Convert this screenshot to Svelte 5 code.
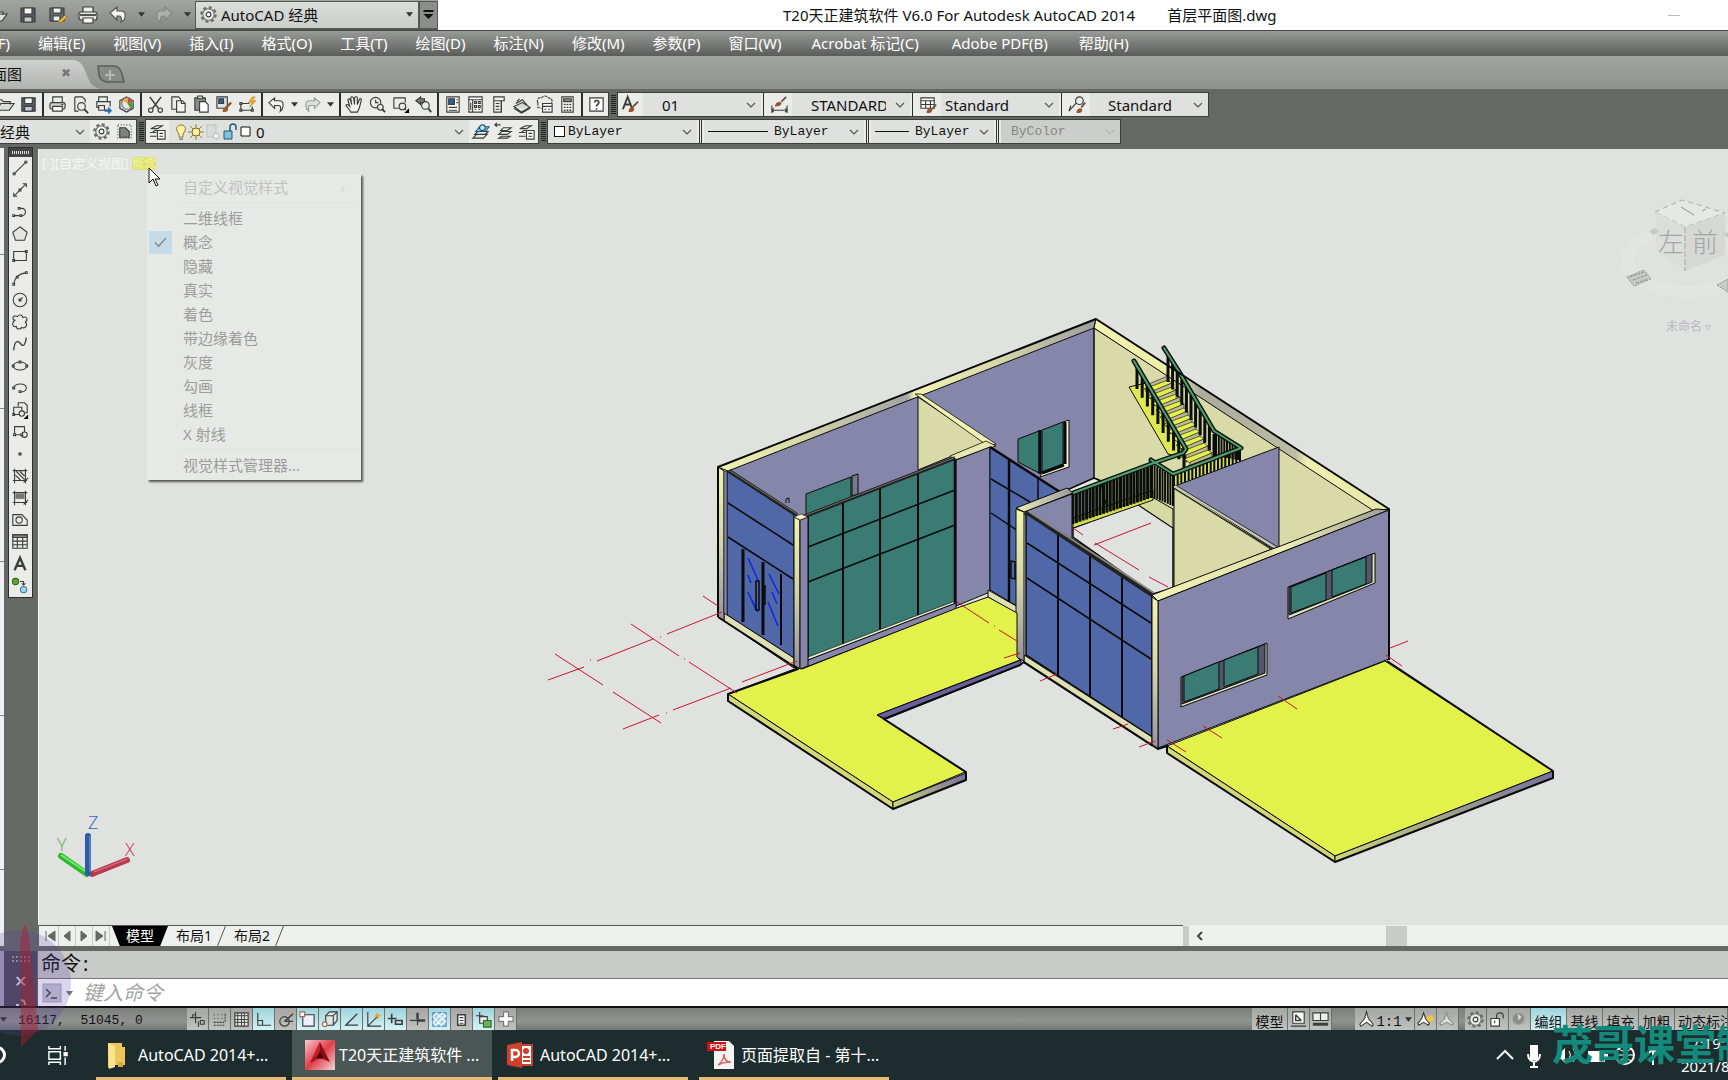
<script>
  const ic = {
    open: '<path d="M1 16V5h5l2 2h7v3M1 16l4-7h14l-5 7z" fill="#dcdedb"/>',
    save: '<path d="M3 3h14v14H3z" fill="#555a66"/><path d="M6 3h8v6H6z" fill="#f4f5f3"/><path d="M6 12h8v5H6z" fill="#c9ccd0"/>',
    saveas: '<path d="M2 3h14v13H2z" fill="#666b72"/><path d="M5 3h8v5H5zM5 11h7v5H5z" fill="#eef0ee"/><path d="M10 17l7-7 2 2-6 6z" fill="#e9b63b" stroke="#8b6a24" stroke-width=".7"/>',
    print: '<path d="M5 8V2h10v6"/><rect x="2" y="8" width="16" height="7" rx="2" fill="#cfd1cf"/><path d="M5 12h10v5H5z" fill="#fff"/><path d="M14 10h2"/>',
    printd: '<path d="M5 8V2h10v6" fill="#eee"/><rect x="1" y="7" width="18" height="8" rx="2" fill="#e4e6e3"/><path d="M2 9h16v2H2z" fill="#555" stroke="none"/><path d="M5 13h10v5H5z" fill="#fff"/>',
    preview: '<path d="M4 2h8l3 3v3M4 2v15h4"/><circle cx="11" cy="12" r="4"/><path d="M14 15l4 4" stroke-width="2"/>',
    publish: '<path d="M5 7V2h9v5M5 13H3V7h14v5M5 11h6v5H5z"/><path d="M11 15h4v-3l4 4.500-4 4v-3h-4z" fill="#2a6dae" stroke="none"/>',
    dwf: '<path d="M3 6l7-4 7 4v8l-7 4-7-4z" fill="#d8dbd8"/><circle cx="11" cy="9" r="6" fill="#e5e7e3" stroke="#777"/><path d="M11 9V3a6 6 0 0 1 5 4z" fill="#d24a3a" stroke="none"/><path d="M11 9l5-2a6 6 0 0 1-2 7z" fill="#4c9a4c" stroke="none"/><path d="M11 9l-5-3a6 6 0 0 1 5-3z" fill="#e3b53c" stroke="none"/>',
    cut: '<path d="M4 2l9 12M16 2L7 14" stroke-width="1.600"/><circle cx="5" cy="16" r="2.300"/><circle cx="15" cy="16" r="2.300"/>',
    copy: '<path d="M3 2h7l2 2v11H3z"/><path d="M8 6h6l3 3v9H8z" fill="#f3f4f2"/><path d="M13 6v3h4"/>',
    paste: '<path d="M3 3h11v13H3z" fill="#8a8d8a"/><path d="M6 1h5v3H6z" fill="#ddd"/><path d="M8 7h6l3 3v8H8z" fill="#fff"/>',
    match: '<path d="M2 2h11v12H2z" fill="#dfe1df"/><path d="M4 4h5v5H4z" fill="#2b5f9b"/><path d="M10 15l7-7" stroke="#8b5a2b" stroke-width="2.500"/><path d="M8 18c0-4 2-5 5-5l1 2c-1 3-3 3-6 3z" fill="#9a622d" stroke="none"/>',
    block: '<path d="M3 9h9M3 9v7h12v-4"/><path d="M2 8h2v2H2zM2 15h2v2H2zM14 15h2v2h-2z" fill="#fff"/><path d="M15 2l-4 6h4l-3 5 7-7h-4l3-4z" fill="#f0b429" stroke="#a87c18" stroke-width=".6"/>',
    undo: '<path d="M2 8l6-5v3h5c4 0 5 4 3 9l-2 2c1-5 0-6-2-6H8v3z" fill="#f4f5f3"/>',
    redo: '<path d="M18 8l-6-5v3H7c-4 0-5 4-3 9l2 2c-1-5 0-6 2-6h4v3z" fill="#dcdedb" stroke="#9a9c9a"/>',
    undol: '<path d="M2 8l7-6v4h4c5 0 5 5 3 9l-3 2c1-5 0-6-2-6H9v4z" fill="#f4f5f3" stroke="#555"/>',
    redol: '<path d="M18 8l-7-6v4H7c-5 0-5 5-3 9l3 2c-1-5 0-6 2-6h2v4z" fill="#b0b2af" stroke="#858785"/>',
    pan: '<path d="M6 18c-1-3-4-5-5-7 1-2 3 0 4 1L3 5c1-2 2-1 3 1l1 4-1-7c1-2 2-1 3 0l1 7V3c1-2 3-1 3 0v7l2-5c1-2 3-1 2 1l-2 8-2 4z" fill="#f1f2f0"/>',
    zoomrt: '<circle cx="8" cy="8" r="5.500"/><path d="M8 5v3h3"/><circle cx="13" cy="13" r="3" fill="#eee"/><path d="M15 15l3 3" stroke-width="2"/>',
    zoomwin: '<path d="M3 3h12v5M3 3v11h5"/><circle cx="12" cy="12" r="3.500"/><path d="M14 14l2 2"/><path d="M19 14v5h-5z" fill="#000" stroke="none"/>',
    zoomprev: '<path d="M2 6l5-4v2h4v4H7v2z" fill="#777"/><circle cx="12" cy="11" r="4" fill="#e9ebe8"/><path d="M15 14l3 4" stroke-width="2"/>',
    props: '<path d="M4 2h13v16H4z" fill="#fff"/><path d="M6 4h6v6H6z" fill="#2b5f9b"/><path d="M14 5h2M14 8h2M6 13h9M6 16h9"/>',
    dc: '<path d="M3 2h14v16H3z" fill="#fff"/><path d="M3 5h14M7 5v13M9 7h2v2H9zM13 7h2v2h-2zM9 11h2v2H9zM13 11h2v2h-2zM9 15h2M13 15h2M5 8v8"/>',
    palette: '<path d="M5 2h11v4H5zM5 6h8v12H5z" fill="#eee"/><path d="M7 9h4M7 12h4M7 15h4M13 6v12"/>',
    sheet: '<path d="M2 12l9-4 8 5-9 5zM2 14l8 5 9-5M4 9l7-4 5 6M8 4l-3 3" fill="#d7d9d6"/>',
    markup: '<path d="M3 8c-2-3 1-6 4-5 2-3 6-2 7 0 4 0 5 4 3 6M3 8v5l4 1" stroke-dasharray="3 1"/><path d="M8 9h10v9H8z" fill="#fff"/><path d="M8 12h10M10 15h2M14 15h2"/>',
    calc: '<path d="M4 2h12v16H4z" fill="#fff"/><path d="M6 4h8v3H6z" fill="#888"/><path d="M6 10h2M9 10h2M12 10h2M6 13h2M9 13h2M12 13h2M6 16h2M9 16h2M12 16h2" stroke-width="1.500"/>',
    help: '<path d="M3 3h14v14H3z" fill="#fff"/><path d="M8 8c0-3 4.500-3 4.500 0 0 2-2.500 2-2.500 4M10 14v1.500" stroke-width="1.700"/>',
    gear: '<circle cx="10" cy="10" r="7.500" stroke-width="2.500" stroke-dasharray="3.200 2.690" stroke="#6b6d6b"/><circle cx="10" cy="10" r="6" fill="#eceeeb" stroke="#6b6d6b"/><circle cx="10" cy="10" r="2.500" fill="#fff"/>',
    wspace: '<path d="M3 3h14v14H3z" stroke-dasharray="1 2"/><path d="M5 6h6l4 4v6H5z" fill="#80827f"/>',
    layers: '<path d="M3 7l6-3h6l-5 3zM2 11h7M2 15h7M5 11l2-2h4"/><path d="M10 9h8v9h-8z" fill="#fff"/><path d="M12 12h4M12 15h4"/>',
    layblue: '<path d="M2 17l4-4h11l-4 4zM4 13l3-3h11l-3 3z" fill="#e5e7e5"/><path d="M5 10l4-5h10l-4 5z" fill="#9ed0e4" stroke="#155a7b"/><circle cx="12" cy="6" r="3" fill="#c9e6f2" stroke="#155a7b"/>',
    layprev: '<path d="M5 17l3-2h9l-3 2zM5 13l3-3h10l-4 3zM7 9l3-3h8l-4 3z" fill="#eef0ee"/><path d="M7 3H1M3 1L1 3l2 2"/>',
    textsty: '<path d="M2 15L7 2l5 13M4 10h7" stroke-width="2"/><path d="M12 13l6-6" stroke="#654" stroke-width="2"/><path d="M8 18c0-4 2-5 5-5l1 2c-1 3-3 3-6 3z" fill="#9a532d" stroke="none"/>',
    dimsty: '<path d="M2 11v8M18 11v8M2 16h16M4 14l-2 2 2 2M16 14l2 2-2 2"/><path d="M12 7l5-5" stroke="#654" stroke-width="2"/><path d="M5 12c1-4 3-5 6-5l1 2c-1 3-4 3-7 3z" fill="#9a532d" stroke="none"/>',
    tabsty: '<path d="M2 3h14v11H2z" fill="#fff"/><path d="M2 6h14M2 10h14M7 6v8M12 6v8"/><path d="M14 15l4-5" stroke="#654" stroke-width="2"/><path d="M8 19c0-4 2-5 5-5l1 2c-1 3-3 3-6 3z" fill="#9a532d" stroke="none"/>',
    mlsty: '<circle cx="12" cy="6" r="4"/><path d="M9 8L1 17l2-6"/><path d="M14 13l4-5" stroke="#654" stroke-width="2"/><path d="M9 19c0-4 2-5 5-5l1 2c-1 3-3 3-6 3z" fill="#9a532d" stroke="none"/>',
    line: '<path d="M4 16L16 4"/><path d="M2.500 15.500h2v2h-2zM15.500 2.500h2v2h-2z" fill="#fff"/>',
    xline: '<path d="M3 17L17 3M3 13v4h4M13 3h4v4"/><path d="M9 9h2v2H9z" fill="#fff"/>',
    pline: '<path d="M3 14h9c5 0 6-8 0-8H9"/><path d="M2 13h2v2H2zM8 5h2v2H8zM10 13h2v2h-2z" fill="#fff"/>',
    polygon: '<path d="M10 2l8 6-3 9H5L2 8z" fill="#e3e5e3"/>',
    rect: '<path d="M3 5h14v10H3z"/><path d="M2 14h2v2H2zM16 4h2v2h-2z" fill="#fff"/>',
    arc: '<path d="M3 17C4 10 8 5 17 4"/><path d="M2 16h2v2H2zM6 8h2v2H6zM16 3h2v2h-2z" fill="#fff"/>',
    circle: '<circle cx="10" cy="10" r="7.500"/><path d="M10 10l3-3M9 9h2v2H9z"/>',
    cloud: '<path d="M5 8C0 8 2 1 7 4c2-3 6-2 6 1 5-2 6 3 3 5 3 3 0 8-4 6-2 3-6 2-6-1-5 1-5-4-3-5-1-1 0-2 2-2z"/>',
    spline: '<path d="M3 17c1-12 5-11 8-7s5 0 6-7" stroke-width="1.500"/>',
    ellipse: '<ellipse cx="10" cy="10" rx="7.500" ry="4.500"/><path d="M1.500 9h2v2h-2zM16.500 9h2v2h-2zM9 4.500h2v2H9z" fill="#fff"/>',
    earc: '<path d="M3 10c1-6 14-6 14 0 0 3-3 5-7 4"/><path d="M2 9h2v2H2zM9 13h2v2H9z" fill="#fff"/>',
    insert: '<path d="M8 6V2h7l3 3v8h-3M3 7h9v8H3z"/><circle cx="12" cy="14" r="3" fill="#eee"/><path d="M2 14h2v2H2z" fill="#fff"/><path d="M19 15v5h-5z" fill="#000" stroke="none"/>',
    mkblock: '<path d="M4 4h11v9H4z"/><circle cx="15" cy="13" r="3" fill="#eee"/><path d="M3 12h2v2H3zM11 12h2v2h-2z" fill="#fff"/>',
    point: '<path d="M9 9h2v2H9z" fill="#fff" stroke-width="1.400"/>',
    hatch: '<path d="M2 4h16M2 15h16M4 2v16M16 2v16M5 9l6 6M6 5l9 9M10 5l5 5M14 17l5-5"/>',
    gradient: '<path d="M5 5h10v6H5z" fill="#777" stroke="none"/><path d="M2 4h16M2 15h16M4 2v16M16 2v16M14 17l5-5"/>',
    region: '<path d="M2 4h10l6 6v6H2z"/><circle cx="9" cy="10" r="3.500"/>',
    table: '<path d="M2 2h16v3H2z" fill="#888"/><path d="M2 2h16v15H2zM2 5h16M2 9h16M2 13h16M7 5v12M13 5v12"/>',
    mtext: '<path d="M4 17L10 3l6 14M6 12h8" stroke-width="2.600"/>',
    addsel: '<circle cx="5" cy="5" r="3.500" fill="#58a834" stroke="#356b1e"/><circle cx="14" cy="14" r="3.500" fill="#a5d5f0" stroke="#3d7da0"/><path d="M10 5h4v4M12 7l2 2 2-2"/>',
    sInfer: '<path d="M2 8h12M8 2v12M5 8V5h3M13 11h4v4h-4zM11 12v6"/>',
    sSnap: '<path d="M4 5h1M8 5h1M12 5h1M4 9h1M8 9h1M12 9h1M4 13h12M4 16h12M16 4v9" stroke-dasharray="2 1"/>',
    sGrid: '<path d="M3 3h14v14H3z" fill="#e4e6e3"/><path d="M3 6h14M3 10h14M3 13h14M6 3v14M10 3v14M13 3v14" stroke-width="1"/>',
    sOrtho: '<path d="M4 3v13h14M4 11h5v5"/>',
    sPolar: '<circle cx="9" cy="12" r="5"/><path d="M9 12l9-8M9 12h9" stroke-width="1.500"/>',
    sOsnap: '<path d="M5 5h12v12H5z" fill="#eef"/><path d="M2 2h5v5H2z" fill="#fff" stroke="#a06a50"/>',
    s3d: '<path d="M6 6l4-4h8v9l-4 5H6z" fill="#dfe6e6"/><path d="M6 6h8v10M14 6l4-4"/><circle cx="5" cy="15" r="2.500" fill="#fff" stroke="#a06a50"/>',
    sTrack: '<path d="M16 4L4 16h13" stroke-width="1.400"/>',
    sDucs: '<path d="M4 2v15h14M4 17L15 6"/><path d="M14 2l-3 5h3l-1 4 5-6h-3z" fill="#f0a429" stroke="none"/>',
    sDyn: '<path d="M2 9h9M6 4v10M10 11h7v4h-7z" stroke-width="1.700"/>',
    sLwt: '<path d="M2 11h8" stroke-width="1.400"/><path d="M10 11h8M10 3v7" stroke-width="2.500"/><path d="M10 10v6"/>',
    sTrans: '<path d="M3 3h14v14H3z" fill="#a8d3ee" stroke="#4b8bc0"/><path d="M3 7l4-4M3 13L13 3M5 17L17 5M11 17l6-6M3 13l4 4M3 7l10 10M7 3l10 10M13 3l4 4" stroke="#fff"/>',
    sQp: '<path d="M6 5h8v11H6z" fill="#fff" stroke-width="1.600"/><path d="M8 8h4M8 11h4M8 14h4"/>',
    sSel: '<path d="M2 6h8M6 2v8"/><path d="M6 7h8v7H6z" fill="#eee"/><path d="M10 11h8v7h-8z" fill="#67b35a" stroke="#2d6e28"/>',
    sPlus: '<path d="M8 2h5v5h5v5h-5v5H8v-5H3V7h5z" fill="#fff" stroke="#777"/>',
    mLay: '<path d="M4 2h12v12H4z" fill="#fff"/><path d="M7 5l6 6M7 5v6h6M2 17h16" stroke-width="1.500"/>',
    mQv: '<path d="M2 3h8v8H2zM10 3h8v8h-8z" fill="#eee"/><path d="M2 15h16" stroke-width="3"/>',
    ann: '<path d="M10 2l2 7 5 6-1 2-6-4-6 4-1-2 5-6z" fill="#fff"/>',
    annV: '<path d="M8 3l2 6 4 5-1 2-5-3-5 3-1-2 4-5z" fill="#fff"/><circle cx="15" cy="9" r="3.500" fill="#f7c33b" stroke="none"/>',
    annA: '<path d="M9 3l2 6 5 5-1 2-6-3-6 3-1-2 5-5z" fill="#dcdedb" stroke="#8c8e8b"/>',
    lock: '<path d="M3 9h9v8H3z" fill="#fff"/><path d="M9 9V6c0-4 7-4 7 0v3M7 11v3"/>',
    ball: '<circle cx="9" cy="9" r="6.500" fill="#8c8e8b" stroke="#a9aba8"/><path d="M8 4l4 3-3 4z" fill="#ddd" stroke="none"/>'
  };
  const topIcons = 'open save | print preview publish dwf | cut copy paste match block | undo v redo v | pan zoomrt zoomwin zoomprev | props dc palette sheet markup calc | help'.split(' ');
  const drawIcons = 'line xline pline polygon rect arc circle cloud spline ellipse earc insert mkblock point hatch gradient region table mtext addsel'.split(' ');
  const menus = ['编辑(E)', '视图(V)', '插入(I)', '格式(O)', '工具(T)', '绘图(D)', '标注(N)', '修改(M)', '参数(P)', '窗口(W)', 'Acrobat 标记(C)', 'Adobe PDF(B)', '帮助(H)'];
  const styleSelects = [
    { icon: 'textsty', text: '01', cls: 'p1' },
    { icon: 'dimsty', text: 'STANDARD', cls: 'p2' },
    { icon: 'tabsty', text: 'Standard', cls: 'p3' },
    { icon: 'mlsty', text: 'Standard', cls: 'p4' }
  ];
  const styles = ['二维线框', '概念', '隐藏', '真实', '着色', '带边缘着色', '灰度', '勾画', '线框', 'X 射线'];
  const toggles = [['sInfer', 0], ['sSnap', 0], ['sGrid', 0], ['sOrtho', 1], ['sPolar', 0], ['sOsnap', 1], ['s3d', 1], ['sTrack', 1], ['sDucs', 1], ['sDyn', 1], ['sLwt', 0], ['sTrans', 1], ['sQp', 0], ['sSel', 1], ['sPlus', 0]];

  const lerp = (a, b, t) => a + (b - a) * t;
  // Evenly spaced vertical posts hanging from a sloped rail.
  function posts(x1, y1, x2, y2, h1, h2, n) {
    let d = '';
    for (let i = 0; i <= n; i++) {
      const t = i / n;
      const x = lerp(x1, x2, t).toFixed(1);
      const y = lerp(y1, y2, t);
      d += `M${x} ${y.toFixed(1)}V${(y + lerp(h1, h2, t)).toFixed(1)}`;
    }
    return d;
  }
  const steps = Array.from({ length: 12 }, (_, i) => ({ lx: 1146 + i * 4, ly: 385 + i * 7, rx: 1168 + i * 4, ry: 376 + i * 7 }));
  const reds = 'M555 654L603 685M548 680L584 667M597 661L653 639M631 624L679 656M689 662L737 693M667 634L722 612M703 596L718 606M613 692L661 723M623 729L659 715M673 710L731 688M742 682L797 661M957 602L989 623M999 630L1017 641M1004 658L1020 653M1040 681L1057 674M1113 729L1128 724M1139 747L1155 741M1167 740L1186 752M1203 726L1222 738M1278 696L1297 709M1390 648L1408 641M1386 655L1402 666M1073 528L1083 535M1094 545L1151 523M1095 543L1139 570M1149 577L1168 587M590 660h1M660 637h1M684 659h1M666 713h1M994 626h1';
</script>

{#snippet icon(name)}
  <svg class="ic" viewBox="0 0 20 20" aria-hidden="true">{@html ic[name]}</svg>
{/snippet}
{#snippet chev()}
  <svg class="chev" viewBox="0 0 10 6" aria-hidden="true"><path d="M1 1l4 4 4-4" /></svg>
{/snippet}
{#snippet tri()}
  <svg class="tri" viewBox="0 0 8 5" aria-hidden="true"><path d="M0 0h8L4 5z" /></svg>
{/snippet}

<div class="app">
  <header class="title">
    <div class="quick">
      <button class="q" aria-label="打开">{@render icon('open')}</button>
      <button class="q" aria-label="保存">{@render icon('save')}</button>
      <button class="q" aria-label="另存为">{@render icon('saveas')}</button>
      <button class="q" aria-label="打印">{@render icon('printd')}</button>
      <button class="q" aria-label="放弃">{@render icon('undol')}</button>
      <button class="qv" aria-label="放弃列表">{@render tri()}</button>
      <button class="q" aria-label="重做">{@render icon('redol')}</button>
      <button class="qv" aria-label="重做列表">{@render tri()}</button>
      <div class="sel ws">
        <select aria-label="工作空间"><option>AutoCAD 经典</option></select>
        <span class="lead">{@render icon('gear')}</span>
        {@render tri()}
      </div>
      <button class="more" aria-label="自定义快速访问工具栏"><svg viewBox="0 0 10 10"><path d="M0 0h10v2H0zM0 4h10L5 9z" /></svg></button>
    </div>
    <div class="caption"><span>T20天正建筑软件 V6.0 For Autodesk AutoCAD 2014</span><span>首层平面图.dwg</span></div>
    <div class="winbtn"><button aria-label="最小化"></button></div>
  </header>

  <nav class="menubar">
    <button class="first">文件(F)</button>
    {#each menus as m}<button class:long={m.length > 8}>{m}</button>{/each}
  </nav>

  <div class="filetabs">
    <svg viewBox="0 0 140 33" aria-hidden="true">
      <defs><linearGradient id="tabg" x2="0" y2="1"><stop stop-color="#cfd1ce" /><stop offset="1" stop-color="#b2b4b1" /></linearGradient></defs>
      <path d="M0 4H72C82 4 84 12 88 22Q91 31 100 33H0z" fill="url(#tabg)" />
      <path d="M98 10H115Q120 11 122 18L124 26H108Q101 26 99 19Z" fill="#898b88" stroke="#5b5d5a" stroke-width="1.500" />
      <path d="M105 19h10M110 14v10" stroke="#b6b8b5" stroke-width="2" />
    </svg>
    <button class="ft">面图</button>
    <button class="fx" aria-label="关闭">✖</button>
  </div>

  <div class="bars">
    <div class="bar">
      <div class="panel std">
        {#each topIcons as n}
          {#if n === '|'}<i class="sep"></i>
          {:else if n === 'v'}<button class="dv" aria-label="列表">{@render tri()}</button>
          {:else}<button class="tb" aria-label={n}>{@render icon(n)}</button>{/if}
        {/each}
      </div>
      <i class="grip"></i>
      <div class="panel stys">
        {#each styleSelects as s, i}
          {#if i}<i class="sep wide"></i>{/if}
          <button class="tb" aria-label={s.icon}>{@render icon(s.icon)}</button>
          <div class="sel sty {s.cls}"><select aria-label={s.icon}><option>{s.text}</option></select>{@render chev()}</div>
        {/each}
      </div>
    </div>
    <div class="bar">
      <div class="panel">
        <div class="sel wk"><select aria-label="工作空间"><option>经典</option></select>{@render chev()}</div>
        <button class="tb" aria-label="工作空间设置">{@render icon('gear')}</button>
        <button class="tb" aria-label="我的工作空间">{@render icon('wspace')}</button>
      </div>
      <i class="grip"></i>
      <div class="panel">
        <button class="tb" aria-label="图层特性">{@render icon('layers')}</button>
        <div class="sel lay">
          <select aria-label="图层"><option>0</option></select>
          <svg class="layic" viewBox="0 0 80 20" aria-hidden="true">
            <path d="M6 12C1 6 5 3 8 3s7 3 2 9v3H6z" fill="#fdf3a0" stroke="#8a7a30" /><path d="M6 17h4" stroke="#555" />
            <path d="M23 2v16M15 10h16M17 4l12 12M29 4L17 16" stroke="#a08020" /><circle cx="23" cy="10" r="4" fill="#fdf09a" stroke="#7a6a20" />
            <path d="M34 3h9v12h-9z" fill="#dadcd9" stroke="#bfc1be" /><circle cx="43" cy="14" r="3" fill="#eee" stroke="#bbb" />
            <path d="M51 9h8v8h-8z" fill="#7fc4dc" stroke="#1d5a70" /><path d="M57 9V5c0-4 6-4 6 0v3" fill="none" stroke="#1d5a70" stroke-width="1.500" />
            <path d="M68 5h9v9h-9z" fill="#fff" stroke="#111" />
          </svg>
          {@render chev()}
        </div>
        <button class="tb" aria-label="置为当前">{@render icon('layblue')}</button>
        <button class="tb" aria-label="上一个图层">{@render icon('layprev')}</button>
        <button class="tb" aria-label="图层状态">{@render icon('layers')}</button>
      </div>
      <i class="grip"></i>
      <div class="panel mono">
        <div class="sel by1"><select aria-label="颜色"><option>ByLayer</option></select><i class="sq"></i>{@render chev()}</div>
        <i class="sep dbl"></i>
        <div class="sel by2"><select aria-label="线型"><option>ByLayer</option></select><i class="ln"></i>{@render chev()}</div>
        <i class="sep dbl"></i>
        <div class="sel by3"><select aria-label="线宽"><option>ByLayer</option></select><i class="ln short"></i>{@render chev()}</div>
        <i class="sep dbl"></i>
        <div class="sel by4"><select aria-label="打印样式" disabled><option>ByColor</option></select>{@render chev()}</div>
      </div>
    </div>
  </div>

  <div class="work">
    <aside class="dock"><i></i><i></i><i></i><i></i><i></i></aside>
    <div class="toolcol">
      <div class="draw">
        <i class="hgrip"></i>
        {#each drawIcons as n}<button aria-label={n}>{@render icon(n)}</button>{/each}
      </div>
    </div>
    <main>
      <div class="view">
        <svg class="model" role="img" aria-label="三维模型">
          <defs>
            <linearGradient id="topL" gradientUnits="userSpaceOnUse" x1="718" y1="0" x2="1096" y2="0"><stop stop-color="#f2f4b4" /><stop offset=".2" stop-color="#d9dba8" /><stop offset=".5" stop-color="#a3a3a6" /><stop offset=".52" stop-color="#f2f4b4" /><stop offset=".75" stop-color="#d5d6a8" /><stop offset="1" stop-color="#9c9ca0" /></linearGradient>
            <linearGradient id="topR" gradientUnits="userSpaceOnUse" x1="1096" y1="0" x2="1389" y2="0"><stop stop-color="#f0f2ae" /><stop offset=".25" stop-color="#eceea8" /><stop offset=".36" stop-color="#aaab9c" /><stop offset=".68" stop-color="#bcbda4" /><stop offset=".72" stop-color="#eef0b0" /><stop offset="1" stop-color="#e6e8a8" /></linearGradient>
            <linearGradient id="topF" gradientUnits="userSpaceOnUse" x1="1153" y1="0" x2="1389" y2="0"><stop stop-color="#f2f4b4" /><stop offset=".5" stop-color="#dfe1a8" /><stop offset=".53" stop-color="#f2f4b4" /><stop offset="1" stop-color="#9c9c94" /></linearGradient>
            <linearGradient id="topM" gradientUnits="userSpaceOnUse" x1="1016" y1="0" x2="1072" y2="0"><stop stop-color="#eceeb0" /><stop offset="1" stop-color="#9c9ca0" /></linearGradient>
            <linearGradient id="col" x2="0" y2="1"><stop stop-color="#f2f4ae" /><stop offset=".5" stop-color="#d2d3a8" /><stop offset="1" stop-color="#9292a0" /></linearGradient>
            <linearGradient id="edge1" x2="1" y2="0"><stop stop-color="#cdd47c" /><stop offset="1" stop-color="#76709c" /></linearGradient>
          </defs>
          <g transform="translate(-39 -149)" stroke="#0a0a0a" stroke-width="1" stroke-linejoin="round">
            <!-- back walls -->
            <path fill="#8686aa" d="M728 470L1094 328V478L1062 492L1026 515L918 560L794 516Z" stroke="none" />
            <path fill="#d8dba8" d="M1094 328L1376 510L1275 549L1158 594L1120 560L1100 480L1094 478Z" />
            <path fill="url(#topL)" d="M718 467L1096 319L1094 328L728 471Z" />
            <path fill="url(#topR)" d="M1096 319L1389 509L1374 511L1094 328Z" />
            <path d="M1094 328V478" fill="none" />
            <path fill="#d8dba8" d="M918 397L986 443L952 456L918 470Z" />
            <path fill="#f0f2b4" d="M915 394L921 394L996 444L988 446Z" stroke-width=".8" />
            <path fill="#e6e8b0" d="M950 456L986 441L996 446L955 460Z" stroke-width=".8" />
            <path fill="#3a7b74" d="M806 494L851 477V498L806 515Z" /><path fill="#77798c" d="M852 476L858 474V494L852 496Z" />
            <path d="M786 503v-4l3-1v5" fill="none" />
            <path fill="#eceec8" d="M1040 477L1069 467V420L1063 422V464L1042 472Z" />
            <path fill="#3a7b74" d="M1018 439L1039 431V473L1018 462Z" /><path fill="#3a7b74" d="M1042 430L1063 422V464L1042 472Z" />
            <path d="M1040 430V474M1065 422V464M1042 473L1064 465" fill="none" stroke-width="3" />
            <!-- recessed glazing -->
            <path fill="#8686aa" d="M956 460L990 447V592L956 606Z" />
            <path fill="#5068a8" d="M990 447L1060 492L1024 510L1017 606L990 590Z" />
            <path fill="#dee0b4" d="M988 590L1018 607V615L988 597Z" />
            <path d="M991 479L1030 502M991 513L1018 531M1038 478V500" fill="none" stroke-width="1.500" /><path d="M1009 460V602M990 447L1060 492" stroke-width="2.500" fill="none" />
            <path d="M1011 561v17l4 1v-17z" fill="#5068a8" stroke-width="1.500" />
            <path d="M1067 490L1094 478L1103 482L1072 493" fill="#e8e8e2" stroke-width="1.500" />
            <!-- stair hall -->
            <path fill="#e0e2df" stroke-width="1.500" d="M1073 528L1137 504L1173 528V588L1153 594L1073 537Z" />
            <path fill="#d5d9a2" d="M1137 504L1152 497L1173 509V528Z" />
            <path fill="#d5de50" d="M1073 518L1153 490V500L1073 528Z" />
            <path fill="#dfe850" d="M1129 387L1146 383L1186 458L1168 454Z" />
            {#each steps as s}
              <path fill="#b9b994" d="M{s.lx} {s.ly}L{s.rx} {s.ry}V{s.ry + 7}L{s.lx} {s.ly + 7}Z" stroke-width=".6" />
              <path fill="#e6f04a" d="M{s.lx - 2} {s.ly + 4}L{s.rx} {s.ry + 4}L{s.rx + 4} {s.ry + 7}L{s.lx + 4} {s.ly + 8}Z" stroke-width=".6" />
            {/each}
            <path fill="#d7e052" d="M1174 476L1240 450V459L1174 486Z" stroke="none" />
            <path fill="none" stroke="#0a0d0a" stroke-width="3" d={posts(1137, 366, 1184, 446, 23, 22, 9)} />
            <path fill="none" stroke="#0a0d0a" stroke-width="3" d={posts(1168, 356, 1214, 434, 26, 24, 10)} />
            <path fill="none" stroke="#0a0d0a" stroke-width="3" d={posts(1073, 494, 1151, 466, 30, 32, 23)} />
            <path fill="none" stroke="#0a0d0a" stroke-width="2" d={posts(1152, 464, 1173, 476, 33, 30, 8)} />
            <path fill="none" stroke="#0a0d0a" stroke-width="2" d={posts(1174, 476, 1240, 450, 10, 12, 18)} />
            <path fill="none" stroke="#0a0d0a" stroke-width="2" d={posts(1216, 434, 1238, 448, 22, 12, 8)} />
            <g fill="none" stroke-linecap="round">
              <path stroke="#0d140f" stroke-width="5" d="M1134 361L1186 449L1183 453L1151 464L1073 493M1164 348L1178 370L1214 431L1241 448L1173 474L1151 460" />
              <path stroke="#52a070" stroke-width="2" d="M1134 361L1186 449L1183 453L1151 464L1073 493M1164 348L1178 370L1214 431L1241 448L1173 474L1151 460" />
            </g>
            <path fill="#8686aa" d="M1175 486L1279 447V548L1272 548Z" />
            <path fill="#d8dba8" d="M1174 488L1272 549L1174 588Z" /><path d="M1175 486L1276 548" stroke="#c9cab6" stroke-width="2" /><path d="M1173 488L1272 550M1177 486L1278 547" fill="none" stroke-width=".7" />
            <path fill="url(#topF)" d="M1152 595L1272 549L1278 547L1376 509L1389 510L1158 601Z" />
            <!-- front right facade -->
            <path fill="#8686aa" d="M1158 601L1389 510V659L1158 748Z" stroke-width="1" />
            <path fill="#dfe1bd" d="M1288 587L1375 553V583L1288 619Z" /><path fill="#55566b" d="M1289 587L1372 554V582L1289 615Z" />
            <path fill="#3a7b74" d="M1291 587L1326 573V600L1291 613Z" /><path fill="#3a7b74" d="M1332 570L1366 557V584L1332 597Z" />
            <path fill="#dfe1bd" d="M1181 677L1267 643V675L1181 707Z" /><path fill="#55566b" d="M1182 677L1265 644V673L1182 704Z" />
            <path fill="#3a7b74" d="M1184 676L1219 662V689L1184 702Z" /><path fill="#3a7b74" d="M1224 660L1258 647V674L1224 687Z" />
            <!-- front middle facade -->
            <path fill="#8686aa" d="M1026 511L1072 494V538L1100 556Z" />
            <path fill="#5068a8" d="M1026 513L1152 596V737L1026 655Z" stroke-width="1.500" />
            <path fill="#dee0b4" d="M1024 655L1152 737V746L1024 663Z" />
            <path d="M1027 543L1151 623M1027 578L1151 659" fill="none" stroke-width="1.500" /><path d="M1058 535V675M1090 555V696M1122 575V717" fill="none" stroke-width="2" />
            <path d="M1026 512L1152 595" stroke="#222" stroke-width="4" /><path d="M1028 511L1154 593" stroke="#85867e" stroke-width="2" />
            <path fill="url(#topM)" d="M1016 508L1067 488L1073 493L1024 512Z" />
            <path fill="url(#col)" d="M1016 509L1024 512V661L1016 657Z" />
            <path fill="url(#col)" d="M1152 597L1158 601V749L1152 745Z" />
            <!-- left wing -->
            <path fill="#5068a8" d="M727 471L794 515V658L727 615Z" />
            <path d="M728 503L793 545M728 537L793 579" fill="none" stroke-width="1.500" /><path d="M743 549V622M763 562V635" fill="none" stroke-width="3" /><path d="M781 574V645" stroke-width="2" />
            <path d="M748 558L758 580M748 592L756 610M752 600l6 12M769 574L779 594M768 602L778 626M772 592l5 12M748 575l3 8" stroke="#1226e0" fill="none" stroke-width="1.500" />
            <path d="M756 581v29h3v-29zM765 585v20" fill="#5068a8" stroke-width="1.500" />
            <path fill="#dee0b4" d="M724 613L794 658V668L724 621Z" />
            <path fill="url(#col)" d="M718 467L724 471V621L718 617Z" /><path fill="#8686aa" d="M724 471L727 472V615L724 613Z" stroke-width=".6" />
            <path d="M729 471L797 515" stroke="#222" stroke-width="4" /><path d="M730 471L797 514" stroke="#77787a" stroke-width="1" />
            <path fill="#3a7b74" d="M808 515L955 459V602L808 658Z" stroke-width="1.500" />
            <path d="M808 547L955 490M808 582L955 525" fill="none" stroke-width="1.500" /><path d="M843 502V645M880 488V631M918 473V617" fill="none" stroke-width="2" />
            <path fill="#e9ebce" d="M808 657L955 601L956 603L808 660Z" stroke-width=".6" />
            <path fill="#8686aa" d="M808 660L956 603V609L806 667Z" /><path d="M803 517L955 458" stroke="#222" stroke-width="4" /><path d="M804 516L954 458" stroke="#6f7072" stroke-width="1" /><path d="M955 459V603" stroke-width="2.500" />
            <path fill="url(#col)" d="M794 517L800 520V669L794 665Z" /><path fill="#8686aa" d="M800 520L808 517V666L800 669Z" /><path fill="#eff1c4" d="M794 517L801 514L808 517L800 520Z" stroke-width=".6" />
            <!-- slabs -->
            <path fill="#e2f24a" d="M728 694L797 668L802 669L957 608L988 597L1017 613V657L1020 660L877 715L965 772L893 802Z" />
            <path fill="#d2d877" d="M728 694L893 802V809L728 701Z" /><path fill="url(#edge1)" d="M893 802L966 773V780L893 809Z" />
            <path fill="#6a619c" d="M1021 660V665L886 719L877 715Z" />
            <path fill="#e2f24a" d="M1167 746L1385 661L1553 771L1335 856Z" />
            <path fill="#d2d877" d="M1167 746L1335 856V862L1167 753Z" /><path fill="url(#edge1)" d="M1335 856L1553 771V778L1335 862Z" />
            <path fill="none" stroke-width="2" d="M718 617V467L1096 319L1389 509V660M718 617L798 669L728 694V701L893 809L966 780V772L884 719L1020 665L1024 662L1158 749L1167 746V753L1335 862L1553 778V771L1387 661" />
            <path d={reds} fill="none" stroke="#c8142c" />
            <!-- coordinate axes -->
            <g stroke-linecap="round" stroke-width="6"><path d="M61 856L87 874" stroke="#2fb82f" /><path d="M92 874L127 860" stroke="#b83a50" /><path d="M88 836V873" stroke="#2e5ba8" /></g>
            <path d="M61 855L85 871" stroke="#6cf06c" stroke-width="2" /><path d="M94 872L127 859" stroke="#e08090" stroke-width="1" /><path d="M90 836V872" stroke="#7fa0e0" />
            <g stroke="none" class="axis"><text x="88" y="829" fill="#3a60c8">Z</text><text x="57" y="851" fill="#57a857">Y</text><text x="125" y="856" fill="#cc3350">X</text></g>
          </g>
        </svg>

        <svg class="cube" viewBox="0 0 128 170" aria-label="视图立方">
          <ellipse cx="88" cy="80" rx="60" ry="32" fill="none" stroke="#e3e5e2" stroke-width="12" />
          <path d="M55 32L82 20L125 33L85 47Z" fill="#e6e8e5" stroke="#a9aba8" stroke-dasharray="5 4" />
          <path d="M55 32L85 47V91L57 70Z" fill="#dcdedb" /><path d="M85 47L125 33V75L85 91Z" fill="#d6d8d5" />
          <path d="M85 47V91" stroke="#a5a7a4" stroke-dasharray="6 2" /><path d="M81 27l13 8M102 31l4-2" stroke="#8f918e" />
          <text x="58" y="72" class="ct">左</text><text x="92" y="72" class="ct">前</text>
          <path d="M27 97L44 90L51 99L34 106ZM117 105L128 99V112Z" fill="#c9cbc8" stroke="#8f918e" stroke-dasharray="2 1" />
          <path d="M30 97l14-5M33 100l14-5M36 103l12-4" stroke="#8f918e" stroke-dasharray="3 1" />
          <path d="M49 51l6-3 4 4-6 3zM123 54l5-2v6z" fill="#c7c9c6" />
          <text x="66" y="151" class="cl">未命名 ▿</text>
        </svg>

        <div class="vlabel"><span>[-]</span><span>[自定义视图]</span><mark>概念</mark></div>

        <div class="ctx" role="menu">
          <button class="off" role="menuitem" disabled><i></i>自定义视觉样式<b>›</b></button>
          <hr />
          {#each styles as s}
            <button role="menuitem"><i class:on={s === '概念'}>{#if s === '概念'}<svg viewBox="0 0 14 12"><path d="M1 6l4 4 8-9" /></svg>{/if}</i>{s}</button>
          {/each}
          <hr />
          <button role="menuitem"><i></i>视觉样式管理器...</button>
        </div>
        <svg class="cursor" viewBox="0 0 13 20" aria-hidden="true"><path d="M1 1v15l4-4 3 7 2-1-3-6h5z" fill="#fff" stroke="#111" /></svg>
      </div>

      <div class="layouts">
        <div class="nav">
          <button aria-label="第一个"><svg viewBox="0 0 12 12"><path d="M2 1v10M11 1v10L4 6z" /></svg></button>
          <button aria-label="上一个"><svg viewBox="0 0 12 12"><path d="M9 1v10L3 6z" /></svg></button>
          <button aria-label="下一个"><svg viewBox="0 0 12 12"><path d="M3 1v10l6-5z" /></svg></button>
          <button aria-label="最后一个"><svg viewBox="0 0 12 12"><path d="M10 1v10M1 1v10l7-5z" /></svg></button>
        </div>
        <button class="lt act">模型</button>
        <button class="lt">布局1</button><svg class="slash" viewBox="0 0 8 20"><path d="M8 0L0 20" /></svg>
        <button class="lt">布局2</button><svg class="slash" viewBox="0 0 8 20"><path d="M8 0L0 20" /></svg>
        <div class="hs"><i class="split"></i><button aria-label="向左滚动"><svg viewBox="0 0 8 10"><path d="M6 1L2 5l4 4" /></svg></button><i class="thumb"></i></div>
      </div>
    </main>
  </div>

  <div class="cmd">
    <aside class="dock"></aside>
    <div class="cside"><i class="dots"></i><button aria-label="关闭">✕</button><svg viewBox="0 0 12 8" aria-hidden="true"><path d="M1 7h3M6 2q4 0 4 5" /></svg></div>
    <div class="cbody">
      <div class="hist">命令<span>:</span></div>
      <label class="cin">
        <svg viewBox="0 0 32 20" aria-hidden="true"><rect x="1" y="1" width="18" height="18" fill="#c9cad6" stroke="#aaabb8" /><path d="M4 6l4 4-4 4M9 15h6" fill="none" stroke="#444" stroke-width="1.500" /><path d="M24 8h7l-3.500 5z" fill="#777" /></svg>
        <input placeholder="键入命令" aria-label="键入命令" />
      </label>
    </div>
  </div>

  <footer class="status">
    <button class="sv" aria-label="选项">{@render tri()}</button>
    <span class="coord">16117,&nbsp; 51045, 0</span>
    <div class="tg">{#each toggles as [n, on]}<button class:on aria-label={n}>{@render icon(n)}</button>{/each}</div>
    <div class="sr">
      <button class="tx">模型</button>
      <button aria-label="布局">{@render icon('mLay')}</button>
      <button aria-label="快速查看">{@render icon('mQv')}</button>
      <i class="g1"></i>
      <button class="sc">{@render icon('ann')}<span>1:1</span>{@render tri()}</button>
      <button aria-label="注释可见性">{@render icon('annV')}</button>
      <button aria-label="自动缩放">{@render icon('annA')}</button>
      <i class="g2"></i>
      <button aria-label="切换工作空间">{@render icon('gear')}</button>
      <button aria-label="锁定">{@render icon('lock')}</button>
      <button aria-label="隔离对象">{@render icon('ball')}</button>
      <button class="tx on">编组</button><button class="tx">基线</button><button class="tx">填充</button><button class="tx">加粗</button><button class="tx last">动态标注</button>
    </div>
  </footer>

  <div class="task">
    <button class="cort" aria-label="Cortana"></button>
    <button class="tv" aria-label="任务视图"><svg viewBox="0 0 22 22"><path d="M2 1v3h12V1M2 21v-3h12v3M2 7h12v8H2zM19 1v5M19 13v8" /><path d="M18 8h3v3h-3z" fill="#fff" /></svg></button>
    <button class="ti t1"><svg viewBox="0 0 30 30"><path d="M5 3h14v4h3v18H11L5 28z" fill="#ecc65a" /><path d="M5 3l7 3v21l-6 2z" fill="#fbe48e" /><path d="M15 22h5v5h-5z" fill="#d9a93c" /></svg>AutoCAD 2014+...</button>
    <button class="ti t2"><svg viewBox="0 0 30 30"><defs><linearGradient id="ag" x2="1" y2="1"><stop stop-color="#f6c9cc" /><stop offset=".5" stop-color="#e0404a" /><stop offset="1" stop-color="#f6d5d8" /></linearGradient></defs><path d="M0 0h30v30H0z" fill="url(#ag)" /><path d="M15 2L25 22l-7-3h-6l-7 4z" fill="#8c0d14" /><path d="M15 2v11l-10 10z" fill="#c91c25" /><path d="M15 11l3 7h-6z" fill="#3c0408" /></svg>T20天正建筑软件 ...</button>
    <button class="ti t3"><svg viewBox="0 0 30 30"><path d="M14 5h13v20H14z" fill="#fff" stroke="#c8402c" stroke-width="2" /><path d="M2 5L17 2v26L2 25z" fill="#cf3f2a" /><path d="M7 21V10h3.500a3.500 3.500 0 0 1 0 7H7" fill="none" stroke="#fff" stroke-width="2.500" /><circle cx="21" cy="11" r="3" fill="#cf3f2a" /><path d="M18 17h7M18 21h7" stroke="#cf3f2a" stroke-width="2" /></svg>AutoCAD 2014+...</button>
    <button class="ti t4"><svg viewBox="0 0 30 30"><path d="M8 1h15l5 5v23H8z" fill="#f4f4f4" /><path d="M12 25c4-3 6-7 6-11 0 5 2 8 7 8-5 0-8 0-13 3z" fill="none" stroke="#d8686a" stroke-width="1.500" /><path d="M1 2h19v9H1z" fill="#cf1212" /><text x="4" y="9" class="pdf">PDF</text></svg>页面提取自 - 第十...</button>
    <div class="tray">
      <svg viewBox="0 0 180 30" aria-hidden="true">
        <g fill="none" stroke="#fff" stroke-width="2"><path d="M3 19l8-8 8 8" /><path d="M34 14c0 10 12 10 12 0M40 22v5M36 27h8" /><circle cx="131" cy="15" r="9" /><path d="M122 15h18M131 6v18M125 9q6 5 12 0M125 21q6-5 12 0" stroke-width="1" /><path d="M159 25V9M155 13l4-4 4 4" /><path d="M75 11q3 4 0 8M79 8q5 7 0 14" stroke-width="1" /></g>
        <path d="M36 5h8v15h-8zM64 12h3l4-4v15l-4-4h-3zM94 11h17v11H94zM111 14h3v5h-3z" fill="#fff" />
      </svg>
      <div class="clock"><span>7:19:26</span><span>2021/8/15</span></div>
    </div>
  </div>

  <div class="mark">茂哥课堂制</div>
  <svg class="stain" viewBox="0 0 72 150" aria-hidden="true"><circle cx="18" cy="68" r="53" fill="#5b3fa8" fill-opacity=".22" /><path d="M20 30Q25 -10 30 30L38 115L21 132Z" fill="#b01c2c" fill-opacity=".45" /></svg>
</div>

<style>
  :global(body) { margin: 0; background: #666864; }
  .app { position: relative; min-height: 100vh; display: flex; flex-direction: column; overflow: hidden; background: #666864; color: #111; font: 15px/20px "Noto Sans", "Noto Sans CJK SC", sans-serif; }
  button, select, input { font: inherit; color: inherit; border: 0; padding: 0; margin: 0; background: none; }
  button { display: flex; align-items: center; justify-content: center; white-space: nowrap; flex: none; }
  i { font-style: normal; display: block; flex: none; }
  .ic { width: 19px; height: 19px; flex: none; fill: none; stroke: #3b3d3b; stroke-width: 1.200; overflow: visible; }
  .tri { width: 7px; height: 5px; fill: #333; flex: none; }
  .chev { width: 10px; height: 6px; fill: none; stroke: #555; stroke-width: 1.200; }
  .sel { display: grid; align-items: center; }
  .sel > * { grid-area: 1 / 1; }
  .sel select { appearance: none; width: 100%; height: 100%; border-radius: 0; opacity: 1; }
  .sel > :global(.chev), .sel > :global(.tri) { justify-self: end; margin-right: 5px; pointer-events: none; }

  .title { height: 30px; display: flex; background: #fff; flex: none; }
  .quick { width: 438px; display: flex; align-items: center; background: linear-gradient(#a3a5a2, #868885); border-bottom: 1px solid #555; box-sizing: border-box; flex: none; }
  .q { width: 30px; }
  .q > :global(.ic) { width: 20px; height: 20px; }
  .q:first-child { margin-left: -17px; }
  .qv { width: 16px; }
  .ws { flex: 1; height: 28px; background: linear-gradient(#dcdedb, #cbcdca); border: 1px solid #555; box-sizing: border-box; }
  .ws select { padding-left: 25px; }
  .lead { padding-left: 3px; display: flex; pointer-events: none; width: 20px; }
  .more { width: 19px; height: 28px; border: 1px solid #555; background: #8c8e8b; }
  .more svg { width: 11px; height: 10px; fill: #111; }
  .caption { flex: 1; display: flex; gap: 32px; padding-left: 345px; line-height: 31px; white-space: nowrap; }
  .winbtn { width: 60px; display: flex; align-items: center; }
  .winbtn button { width: 12px; height: 1px; background: #bbb; }

  .menubar { height: 26px; flex: none; display: flex; gap: 28px; padding: 0 0 2px 10px; background: linear-gradient(#999b98, #838582 35%, #5b5d5a); border-top: 1px solid #444; box-sizing: border-box; color: #fff; overflow: hidden; }
  .menubar .first { width: 0; justify-content: flex-end; }
  .menubar .long { padding: 0 3px 0 2px; }
  .filetabs { height: 33px; flex: none; display: flex; align-items: center; background: linear-gradient(#a2a4a1, #8f918e); }
  .filetabs > svg { width: 140px; height: 33px; margin-right: -140px; }
  .ft, .fx { z-index: 1; }
  .ft { width: 22px; justify-content: flex-end; padding-top: 2px; }
  .fx { margin-left: 39px; font-size: 12px; color: #777; }

  .bars { flex: none; padding: 4px 0 5px; display: flex; flex-direction: column; gap: 4px; }
  .bar { display: flex; height: 23px; }
  .panel { display: flex; align-items: stretch; background: #ebecea; outline: 1px solid #3c3e3b; overflow: hidden; }
  .std > :first-child { margin-left: -6px; }
  .tb { width: 23px; }
  .dv { width: 13px; }
  .sep { width: 2px; margin: 0 2px; background: #2c2e2c; }
  .wide { margin: 0 3px 0 2px; width: 1px; }
  .stys .tb { width: 25px; }
  .dbl { width: 3px; box-sizing: border-box; margin: 0 2px; background: none; border: 1px solid #333; border-width: 0 1px; }
  .grip { width: 10px; margin: 2px 0; background: repeating-linear-gradient(#222 0 1px, transparent 1px 2px) center / 5px no-repeat; }
  .sel select { background: #dfe1de; }
  .sel.ws select { background: none; }
  .sty { width: 118px; }
  .p1 select { padding-left: 19px; }
  .p2 select { padding-left: 19px; padding-right: 24px; }
  .p3 select { padding-left: 4px; }
  .p4 select { padding-left: 18px; }
  .wk { width: 90px; }
  .lay { width: 300px; }
  .lay select { padding-left: 87px; }
  .layic { width: 80px; height: 20px; padding-left: 4px; pointer-events: none; }
  .mono { font: 13px/20px "Liberation Mono", monospace; }
  .by1 { width: 149px; } .by1 select { padding-left: 20px; }
  .by2 { width: 160px; } .by2 select { padding-left: 70px; }
  .by3 { width: 123px; } .by3 select { padding-left: 44px; }
  .by4 { width: 119px; } .by4 select { padding-left: 10px; background: #cccecb; color: #858785; }
  .by4 > :global(.chev) { stroke: #b5b7b4; }
  .sq { width: 9px; height: 9px; border: 1px solid #111; background: #fff; margin-left: 6px; }
  .ln { width: 60px; height: 1px; background: #111; margin-left: 4px; }
  .short { width: 34px; }

  .work { flex: 1; display: flex; min-height: 0; }
  .dock { width: 4px; background: #eef0f4; flex: none; display: flex; flex-direction: column; justify-content: space-around; padding: 30px 0 0; box-sizing: border-box; }
  .dock i { height: 1px; background: #888; }
  .toolcol { width: 35px; padding-left: 5px; box-sizing: border-box; flex: none; }
  .draw { width: 23px; background: #ebecea; outline: 1px solid #2e302e; }
  .hgrip { height: 9px; background: repeating-linear-gradient(90deg, #ddd 0 1px, #444 1px 2px) center / 17px 3px no-repeat #444; }
  .draw button { width: 22px; height: 22px; }
  .draw button > :global(.ic) { width: 18px; height: 18px; }
  main { flex: 1; min-width: 0; display: flex; flex-direction: column; padding-top: 1px; }
  .view { flex: 1; position: relative; background: #e0e2df; border-left: 1px solid #f5f6f4; margin-left: -1px; overflow: hidden; }
  .model { display: block; width: 100%; height: 100%; position: absolute; inset: 0; }
  .axis { font: 300 18px "Open Sans", sans-serif; }
  .cube { position: absolute; right: 0; top: 31px; width: 128px; height: 170px; fill: none; }
  .ct { font: 300 26px "Noto Sans CJK SC", sans-serif; fill: #a4a6a3; }
  .cl { font: 12px "Noto Sans CJK SC", sans-serif; fill: #b3b9c4; }
  .vlabel { position: absolute; left: 3px; top: 4px; display: flex; align-items: center; color: #f6f7f5; font-size: 13px; }
  .vlabel mark { background: #dde36a; color: #eff2a8; line-height: 13px; margin-left: 4px; border-radius: 4px; font-size: 12px; }
  .ctx { position: absolute; left: 108px; top: 25px; width: 214px; box-sizing: border-box; padding: 1px 2px 3px; background: #e7e9e6; box-shadow: 2px 2px 2px #555; color: #9b9d9a; }
  .ctx button { width: 100%; height: 24px; justify-content: flex-start; }
  .ctx button i { width: 23px; height: 23px; margin-right: 11px; display: flex; align-items: center; justify-content: center; }
  .ctx .on { background: #c5dbe7; }
  .ctx svg { width: 13px; height: 11px; fill: none; stroke: #7d868b; stroke-width: 1.500; }
  .ctx .off { color: #c0c2bf; }
  .ctx b { margin-left: auto; padding-right: 14px; font-weight: 400; color: #d5d7d4; }
  .ctx hr { border: 0; border-top: 1px solid #e1e3e0; margin: 3px 0 3px 30px; }
  .cursor { position: absolute; left: 109px; top: 18px; width: 13px; height: 20px; }

  .layouts { height: 21px; flex: none; display: flex; background: #eef0ed; border-top: 1px solid #555; box-sizing: border-box; font-size: 14px; padding-left: 3px; }
  .nav { display: flex; }
  .nav button { width: 17px; border-right: 1px solid #c8cac7; box-sizing: border-box; }
  .nav svg { width: 12px; height: 12px; fill: #666; stroke: #666; }
  .lt { padding: 0 5px 0 8px; }
  .act { width: 56px; padding: 0; margin-left: 2px; background: #000; color: #fff; clip-path: polygon(0 0, 100% 0, 86% 100%, 14% 100%); }
  .slash { width: 9px; height: 20px; fill: none; stroke: #555; }
  .hs { margin-left: auto; width: 545px; display: flex; border-top: 1px solid #eef0ed; margin-top: -1px; }
  .split { width: 6px; background: #c9cbc8; }
  .hs button { width: 22px; }
  .hs svg { width: 8px; height: 10px; fill: none; stroke: #444; stroke-width: 2; }
  .thumb { width: 21px; background: #c9cbc8; margin-left: 175px; }

  .cmd { flex: none; display: flex; border-top: 5px solid #666864; border-bottom: 2px solid #111; }
  .cmd .dock { background: #a5a0ba; }
  .cside { width: 34px; background: #4b4a58; display: flex; flex-direction: column; align-items: center; justify-content: space-between; color: #eee; flex: none; box-sizing: border-box; padding-top: 4px; border-right: 1px solid #666; }
  .dots { width: 20px; height: 8px; background: radial-gradient(#999 1px, transparent 1px) 0 0 / 4px 4px; }
  .cside button { font-size: 16px; }
  .cside svg { width: 12px; height: 8px; fill: none; stroke: #ddd; stroke-width: 2; }
  .cbody { flex: 1; font-size: 20px; }
  .hist { height: 27px; line-height: 26px; padding-left: 3px; background: #c8cac7; border-bottom: 1px solid #777; }
  .hist span { padding-left: 2px; }
  .cin { display: flex; align-items: center; height: 27px; background: #fff; padding-left: 4px; }
  .cin svg { width: 32px; height: 20px; flex: none; }
  .cin input { flex: 1; height: 26px; font-style: italic; padding-left: 9px; outline: 0; }
  .cin input::placeholder { color: #a2a4a1; opacity: 1; }

  .status { height: 22px; flex: none; display: flex; background: linear-gradient(#7c7e7b, #919390 60%, #6f7774); overflow: hidden; }
  .sv { width: 6px; }
  .coord { width: 181px; padding-left: 12px; box-sizing: border-box; font: 13px/25px "Liberation Mono", monospace; flex: none; }
  .tg, .sr { display: flex; }
  .tg button, .sr button { width: 22px; box-sizing: border-box; background: linear-gradient(#a4a6a3, #c0c2bf); border-right: 1px solid #6d6f6c; }
  .tg .on, .sr .on { background: linear-gradient(#9fd3dc, #d5f3f6); }
  .sr { margin-left: auto; font-size: 14px; }
  .sr .tx { width: 36px; padding-top: 5px; }
  .sr .last { width: 53px; justify-content: flex-start; padding-left: 3px; overflow: hidden; }
  .g1 { width: 23px; }
  .g2 { width: 6px; }
  .sr .sc { width: 60px; font: 14px "Liberation Mono", monospace; }
  .sc span { padding: 5px 3px 0 0; }

  .task { height: 50px; flex: none; display: flex; background: #1d2d2d; color: #fff; font-size: 16px; overflow: hidden; }
  .cort { width: 18px; height: 18px; border: 3px solid #fff; border-radius: 50%; margin: 16px 0 0 -12px; box-sizing: border-box; }
  .tv { width: 22px; margin: 0 28px 0 40px; }
  .tv svg { width: 21px; height: 21px; fill: none; stroke: #fff; stroke-width: 1.500; }
  .ti { width: 190px; justify-content: flex-start; border-bottom: 3px solid #e9bb74; gap: 5px; padding: 3px 0 0 7px; box-sizing: border-box; overflow: hidden; margin-right: 6px; }
  .ti svg { width: 30px; height: 30px; flex: none; }
  .t2 { width: 200px; padding-left: 13px; gap: 4px; background: #4a5654; }
  .t3 { margin-right: 11px; }
  .pdf { font: 700 8px "Liberation Sans", sans-serif; fill: #fff; }
  .tray { margin-left: auto; display: flex; align-items: center; width: 234px; flex: none; }
  .tray svg { width: 180px; height: 30px; flex: none; }
  .clock { display: flex; flex-direction: column; font-size: 15px; line-height: 23px; margin-left: 7px; }
  .clock span:first-child { padding-left: 10px; }
  .mark { position: absolute; left: calc(100% - 176px); bottom: 17px; font: 700 41px/42px "Noto Sans CJK SC", sans-serif; color: #138a7c; white-space: nowrap; pointer-events: none; }
  .stain { position: absolute; left: 0; bottom: 15px; width: 72px; height: 150px; pointer-events: none; }
</style>
